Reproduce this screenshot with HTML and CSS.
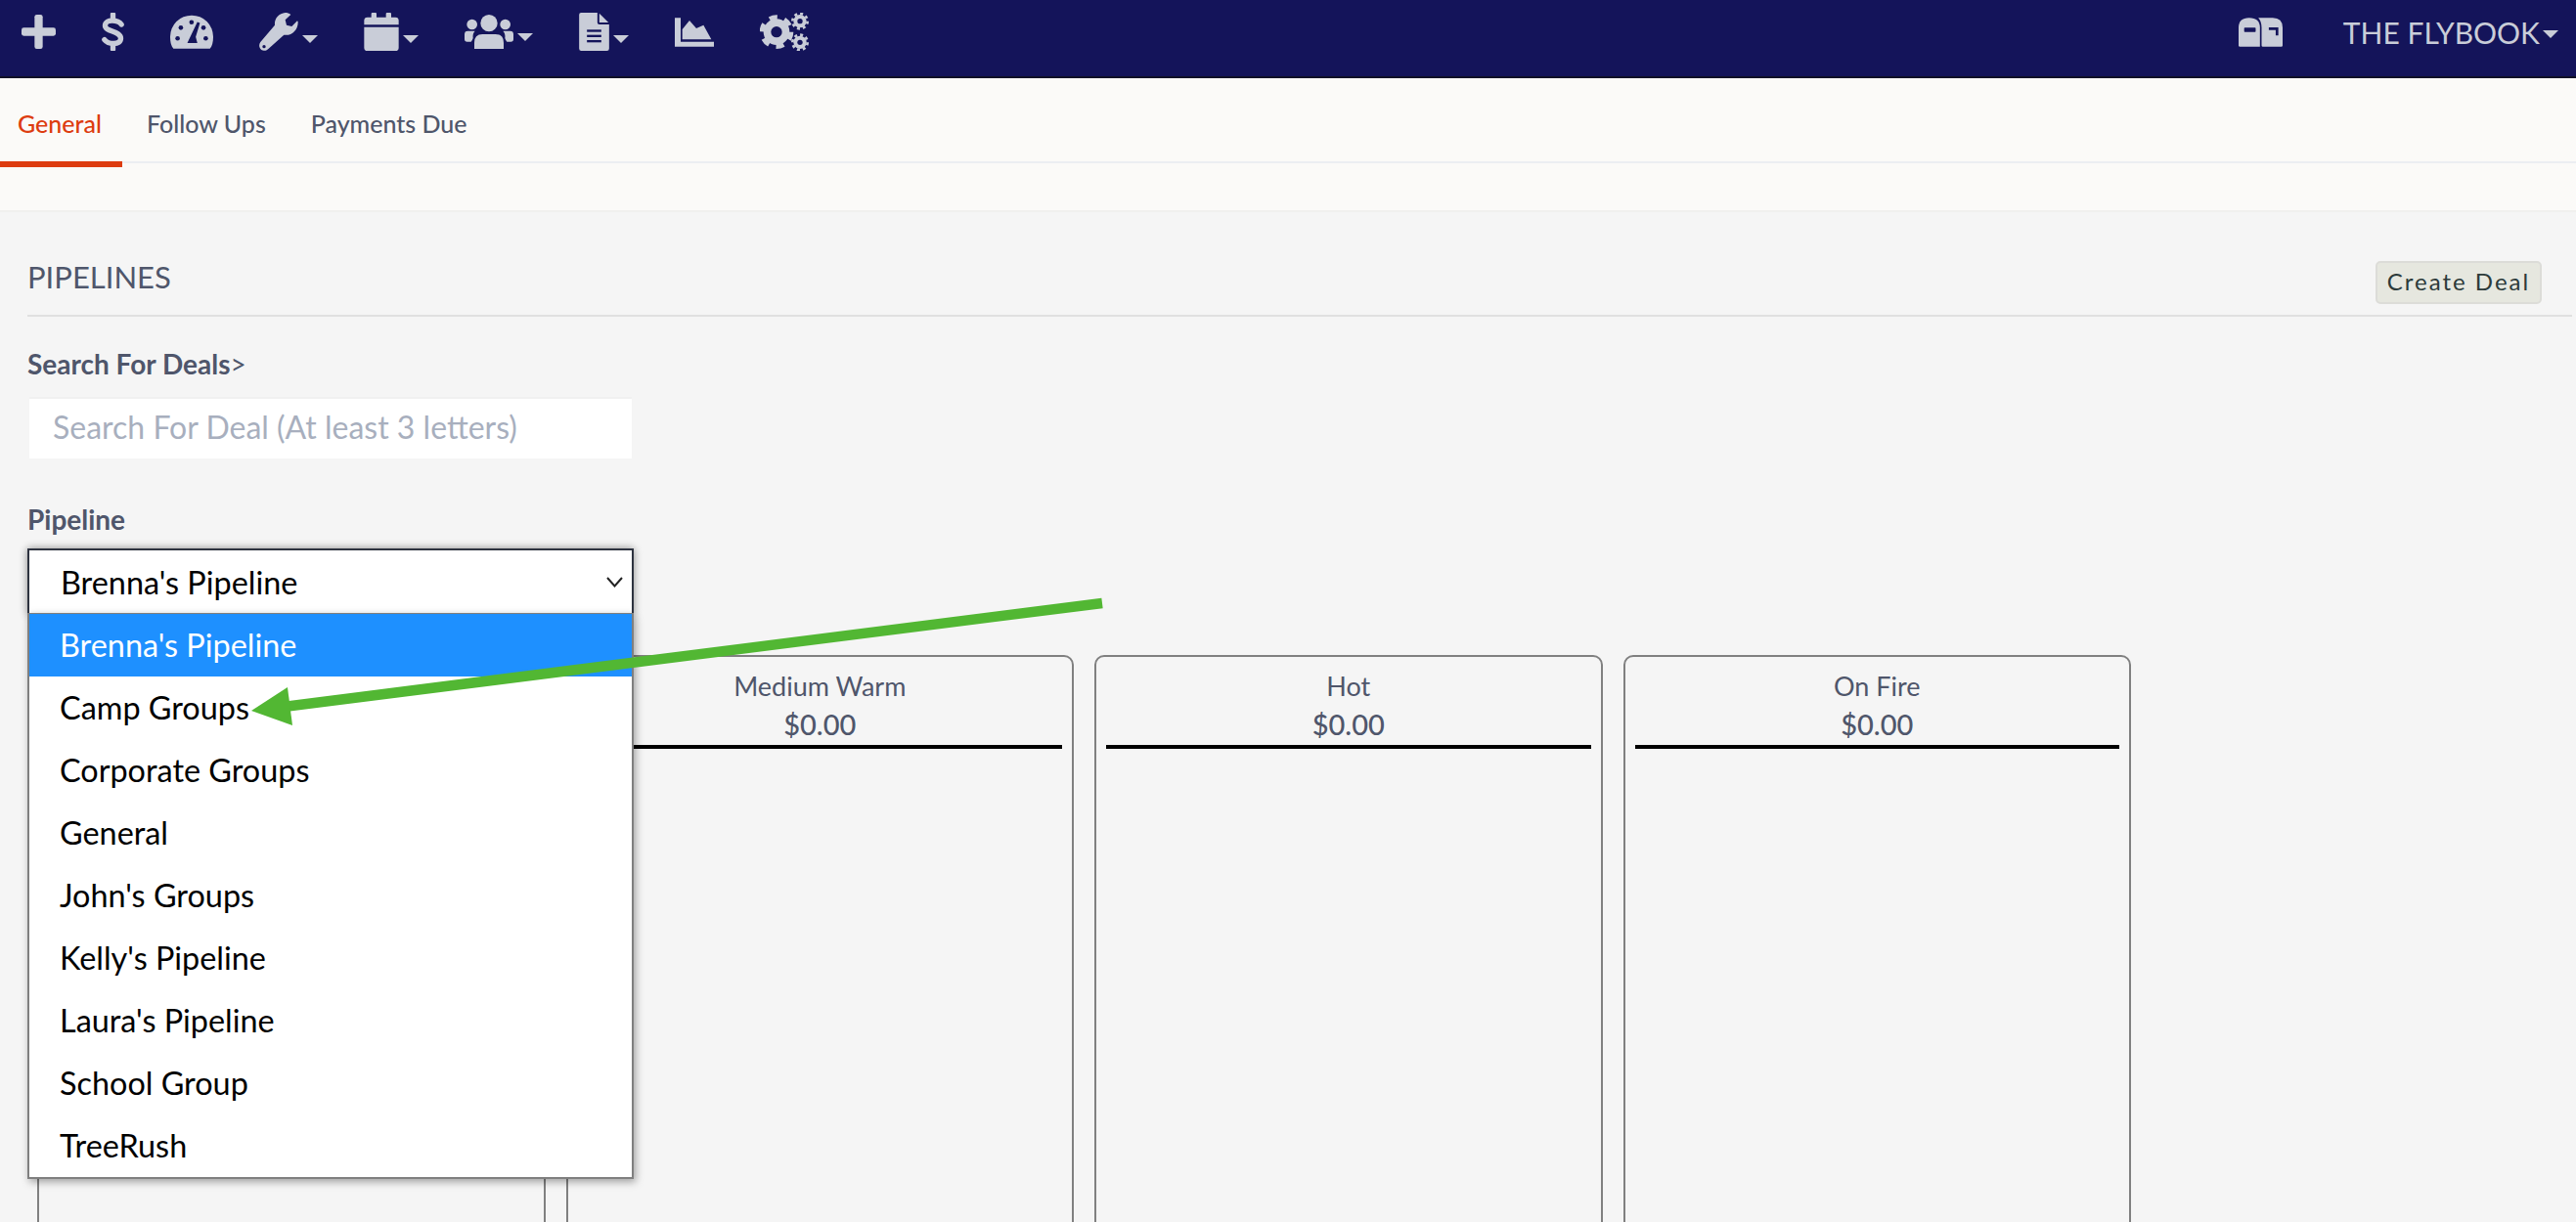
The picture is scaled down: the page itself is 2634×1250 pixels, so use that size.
FILE: index.html
```html
<!DOCTYPE html>
<html lang="en">
<head>
<meta charset="utf-8">
<title>Pipelines</title>
<link rel="stylesheet" href="styles.css">
</head>
<body>
<header class="topbar">
  <nav class="icons">
    <a class="item"><svg class="ic" width="35" height="35" viewBox="0 0 105 105"><rect x="40" width="25" height="105" rx="7"/><rect y="40" width="105" height="25" rx="7"/></svg></a>
    <a class="item"><svg class="ic" width="23" height="39" viewBox="0 0 68 117"><rect x="26" width="16" height="24" rx="3"/><rect x="26" y="93" width="16" height="24" rx="3"/><path class="stroke" d="M60 36C50 22 11 18 10 39C9 59 58 55 58 79C58 100 20 98 8 83"/></svg></a>
    <a class="item"><svg class="ic" width="44" height="35" viewBox="0 0 133 105"><path d="M10 105C3 95 0 85 0 68A66.500 66.500 0 0 1 133 68C133 85 130 95 123 105Z"/><g class="cut"><circle cx="66" cy="23" r="7"/><circle cx="33" cy="40" r="7"/><circle cx="23" cy="73" r="7"/><circle cx="110" cy="73" r="7"/><path d="M84 22L92 25L79 68L84 87H53L62 68Z"/></g><circle cx="103" cy="40" r="7" class="cut"/></svg></a>
    <a class="item"><svg class="ic" width="40" height="39" viewBox="0 0 120 117"><path d="M80 0C60 2 46 18 48 38L4 90C-4 100 2 115 14 116C20 117 25 114 29 110L76 68C100 72 120 52 119 28L117 25L100 42L84 38L80 22L97 6C92 2 86 0 80 0Z"/><circle cx="15" cy="104" r="5" class="cut"/></svg><i class="caret"></i></a>
    <a class="item"><svg class="ic" width="36" height="39" viewBox="0 0 106 117"><rect x="22" width="16" height="20" rx="3"/><rect x="67" width="16" height="20" rx="3"/><path d="M0 37V24Q0 14 10 14H96Q106 14 106 24V37Z"/><path d="M0 44H106V107Q106 117 96 117H10Q0 117 0 107Z"/></svg><i class="caret"></i></a>
    <a class="item"><svg class="ic" width="50" height="35" viewBox="0 0 150 105"><circle cx="75" cy="26" r="26"/><circle cx="23" cy="30" r="16"/><circle cx="125" cy="30" r="16"/><path d="M30 105V86Q30 60 55 60H95Q120 60 120 86V105Q120 105 110 105H40Q30 105 30 105Z"/><path d="M10 50H32Q24 58 26 72Q24 78 20 83H8Q0 83 0 75V60Q0 50 10 50Z"/><path d="M140 50H118Q126 58 124 72Q126 78 130 83H142Q150 83 150 75V60Q150 50 140 50Z"/></svg><i class="caret"></i></a>
    <a class="item"><svg class="ic" width="31" height="39" viewBox="0 0 92 117"><path d="M6 0H56V30Q56 36 62 36H92V110Q92 117 85 117H7Q0 117 0 110V6Q0 0 6 0Z"/><path d="M62 2L90 30H62Z"/><g class="cut"><rect x="24" y="52" width="44" height="7"/><rect x="24" y="68" width="44" height="7"/><rect x="24" y="84" width="44" height="7"/></g></svg><i class="caret"></i></a>
    <a class="item"><svg class="ic" width="40" height="30" viewBox="0 0 120 88"><path d="M0 0H18V73H120V88H0Z"/><path d="M23 66V35L45 8L66 32L88 22L112 66Z"/></svg></a>
    <a class="item"><svg class="ic" width="50" height="39" viewBox="0 0 148 117"><circle cx="50" cy="59" r="40"/><circle class="teeth-l" cx="50" cy="59" r="44"/><circle class="cut" cx="50" cy="59" r="17"/><circle cx="122" cy="26" r="20"/><circle class="teeth-s" cx="122" cy="26" r="23"/><circle class="cut" cx="122" cy="26" r="8"/><circle cx="122" cy="91" r="20"/><circle class="teeth-s" cx="122" cy="91" r="23"/><circle class="cut" cx="122" cy="91" r="8"/></svg></a>
  </nav>
  <div class="account">
    <svg class="ic" width="45" height="30" viewBox="0 0 134 88"><path d="M0 84V30Q0 0 32 0Q65 0 65 30V88H4Q0 88 0 84Z"/><path d="M60 0H104Q134 0 134 30V84Q134 88 130 88H74Q70 88 70 84V30Q70 10 60 0Z"/><rect class="cut" x="17" y="30" width="35" height="13" rx="2"/><path class="flag" d="M92 33H117V54"/></svg>
    <a class="brand">THE FLYBOOK<i class="caret"></i></a>
  </div>
</header>

<section class="subnav">
  <div class="tabs">
    <a class="tab active">General</a>
    <a class="tab">Follow Ups</a>
    <a class="tab">Payments Due</a>
  </div>
</section>

<main class="main">
  <div class="head">
    <h1 class="title">PIPELINES</h1>
    <button class="create">Create Deal</button>
  </div>

  <label class="label label-search">Search For Deals<span class="gt">&gt;</span></label>
  <input class="search" type="text" placeholder="Search For Deal (At least 3 letters)">

  <label class="label label-pipeline">Pipeline</label>
  <div class="select-wrap">
    <div class="select">
      <span>Brenna's Pipeline</span>
      <svg class="chev" width="17" height="11" viewBox="0 0 17 11"><path d="M1 1L8.500 9.500L16 1"/></svg>
    </div>
    <ul class="options">
      <li class="option selected">Brenna's Pipeline</li>
      <li class="option">Camp Groups</li>
      <li class="option">Corporate Groups</li>
      <li class="option">General</li>
      <li class="option">John's Groups</li>
      <li class="option">Kelly's Pipeline</li>
      <li class="option">Laura's Pipeline</li>
      <li class="option">School Group</li>
      <li class="option">TreeRush</li>
    </ul>
  </div>

  <div class="board">
    <article class="col"></article>
    <article class="col"><h2 class="col-name">Medium Warm</h2><p class="col-sum">$0.00</p></article>
    <article class="col"><h2 class="col-name">Hot</h2><p class="col-sum">$0.00</p></article>
    <article class="col"><h2 class="col-name">On Fire</h2><p class="col-sum">$0.00</p></article>
  </div>
</main>

<svg class="arrow" width="1140" height="140" viewBox="250 610 1140 140"><path class="shaft" d="M1127 617L290 723"/><path class="head-tip" d="M257 727L294 703L299 742Z"/></svg>
</body>
</html>
```

FILE: styles.css
```css
* { box-sizing: border-box; }
html, body { margin: 0; height: 1250px; overflow: hidden; }
body { position: relative; background: #f5f5f5; font-family: Lato, "Liberation Sans", sans-serif; color: #4f566b; }
a { color: inherit; text-decoration: none; }

.topbar { height: 80px; background: #14145a; border-bottom: 2px solid #111127; display: flex; justify-content: space-between; align-items: flex-start; padding: 0 18px 0 22px; color: #c9cdd8; }
.icons { display: flex; gap: 47px; height: 65px; align-items: center; }
.item { display: flex; align-items: flex-end; gap: 4px; }
.ic { display: block; fill: #c9cdd8; }
.ic .cut, .cut { fill: #14145a; }
.stroke { fill: none; stroke: #c9cdd8; stroke-width: 16; stroke-linecap: round; }
.flag { fill: none; stroke: #14145a; stroke-width: 8; }
.teeth-l { fill: none; stroke: #c9cdd8; stroke-width: 16; stroke-dasharray: 24 22.1; }
.teeth-s { fill: none; stroke: #c9cdd8; stroke-width: 8; stroke-dasharray: 9 9; }
.caret { display: block; width: 0; height: 0; border-left: 8px solid transparent; border-right: 8px solid transparent; border-top: 8px solid #c9cdd8; margin-bottom: 8px; }
.account { display: flex; align-items: center; gap: 62px; height: 65px; }
.brand { display: flex; align-items: center; gap: 3px; font-size: 30px; line-height: 30px; }
.brand .caret { margin: 4px 0 0; }

.subnav { height: 137px; background: #fbfaf8; border-bottom: 2px solid #f0f0ee; }
.tabs { height: 87px; border-bottom: 2px solid #eceef2; display: flex; gap: 7px; align-items: flex-start; }
.tab { height: 91px; padding: 0 21px 0 18px; font-size: 25px; line-height: 93px; font-weight: 500; color: #4f566b; }
.tab.active { color: #dd3c10; border-bottom: 6px solid #dd3c10; }

.main { padding: 0 4px 0 28px; }
.head { height: 107px; padding: 50px 31px 0 0; border-bottom: 2px solid #e0e0e0; display: flex; justify-content: space-between; align-items: flex-start; }
.title { margin: 0; font-size: 31px; line-height: 32px; font-weight: 400; color: #4f566b; }
.create { width: 170px; height: 44px; padding: 0 0 3px; background: #e6e7df; border: 2px solid #dcdcd8; border-radius: 5px; font-family: inherit; font-size: 24px; letter-spacing: 2px; color: #2c3a3a; }

.label { display: block; font-size: 28px; line-height: 30px; font-weight: 700; color: #4f566b; }
.label-search { margin-top: 33px; }
.gt { font-weight: 400; }
.search { display: block; width: 616px; height: 63px; margin: 19px 0 0 2px; padding: 0 0 4px 24px; background: #fff; border: 0; border-top: 2px solid #f0f0f0; font-family: inherit; font-size: 32px; outline: none; }
.search::placeholder { color: #a8afbe; opacity: 1; }
.label-pipeline { margin-top: 47px; }

.select-wrap { position: relative; width: 620px; margin-top: 15px; }
.select { height: 68px; padding: 0 9px 0 32px; display: flex; justify-content: space-between; align-items: center; background: #fff; border: 2px solid #2e3340; box-shadow: 0 0 8px rgba(0,0,0,.45); font-size: 32.4px; color: #000; }
.chev { display: block; fill: none; stroke: #222; stroke-width: 2; }
.options { position: absolute; z-index: 2; top: 66px; left: 0; width: 620px; margin: 0; padding: 0; list-style: none; background: #fff; border: 2px solid #7f7f7f; border-top-width: 1px; box-shadow: 2px 3px 8px rgba(0,0,0,.35); }
.option { height: 64px; padding-left: 31px; font-size: 32.4px; line-height: 64px; color: #000; }
.option.selected { background: #1e90ff; color: #fff; }

.board { display: flex; gap: 21px; margin: 41px 0 0 10px; }
.col { flex: none; width: 519.5px; height: 700px; padding: 12px 10px 0; border: 2px solid #808080; border-radius: 10px; text-align: center; }
.col-name { margin: 0; font-size: 27px; line-height: 36px; font-weight: 400; color: #4f566b; }
.col-sum { margin: 3px 0 0; padding-bottom: 3px; font-size: 29px; line-height: 36px; font-weight: 500; color: #4f566b; border-bottom: 4px solid #000; }

.arrow { position: absolute; z-index: 3; left: 250px; top: 610px; }
.shaft { fill: none; stroke: #52b733; stroke-width: 10.5; }
.head-tip { fill: #52b733; }
```
